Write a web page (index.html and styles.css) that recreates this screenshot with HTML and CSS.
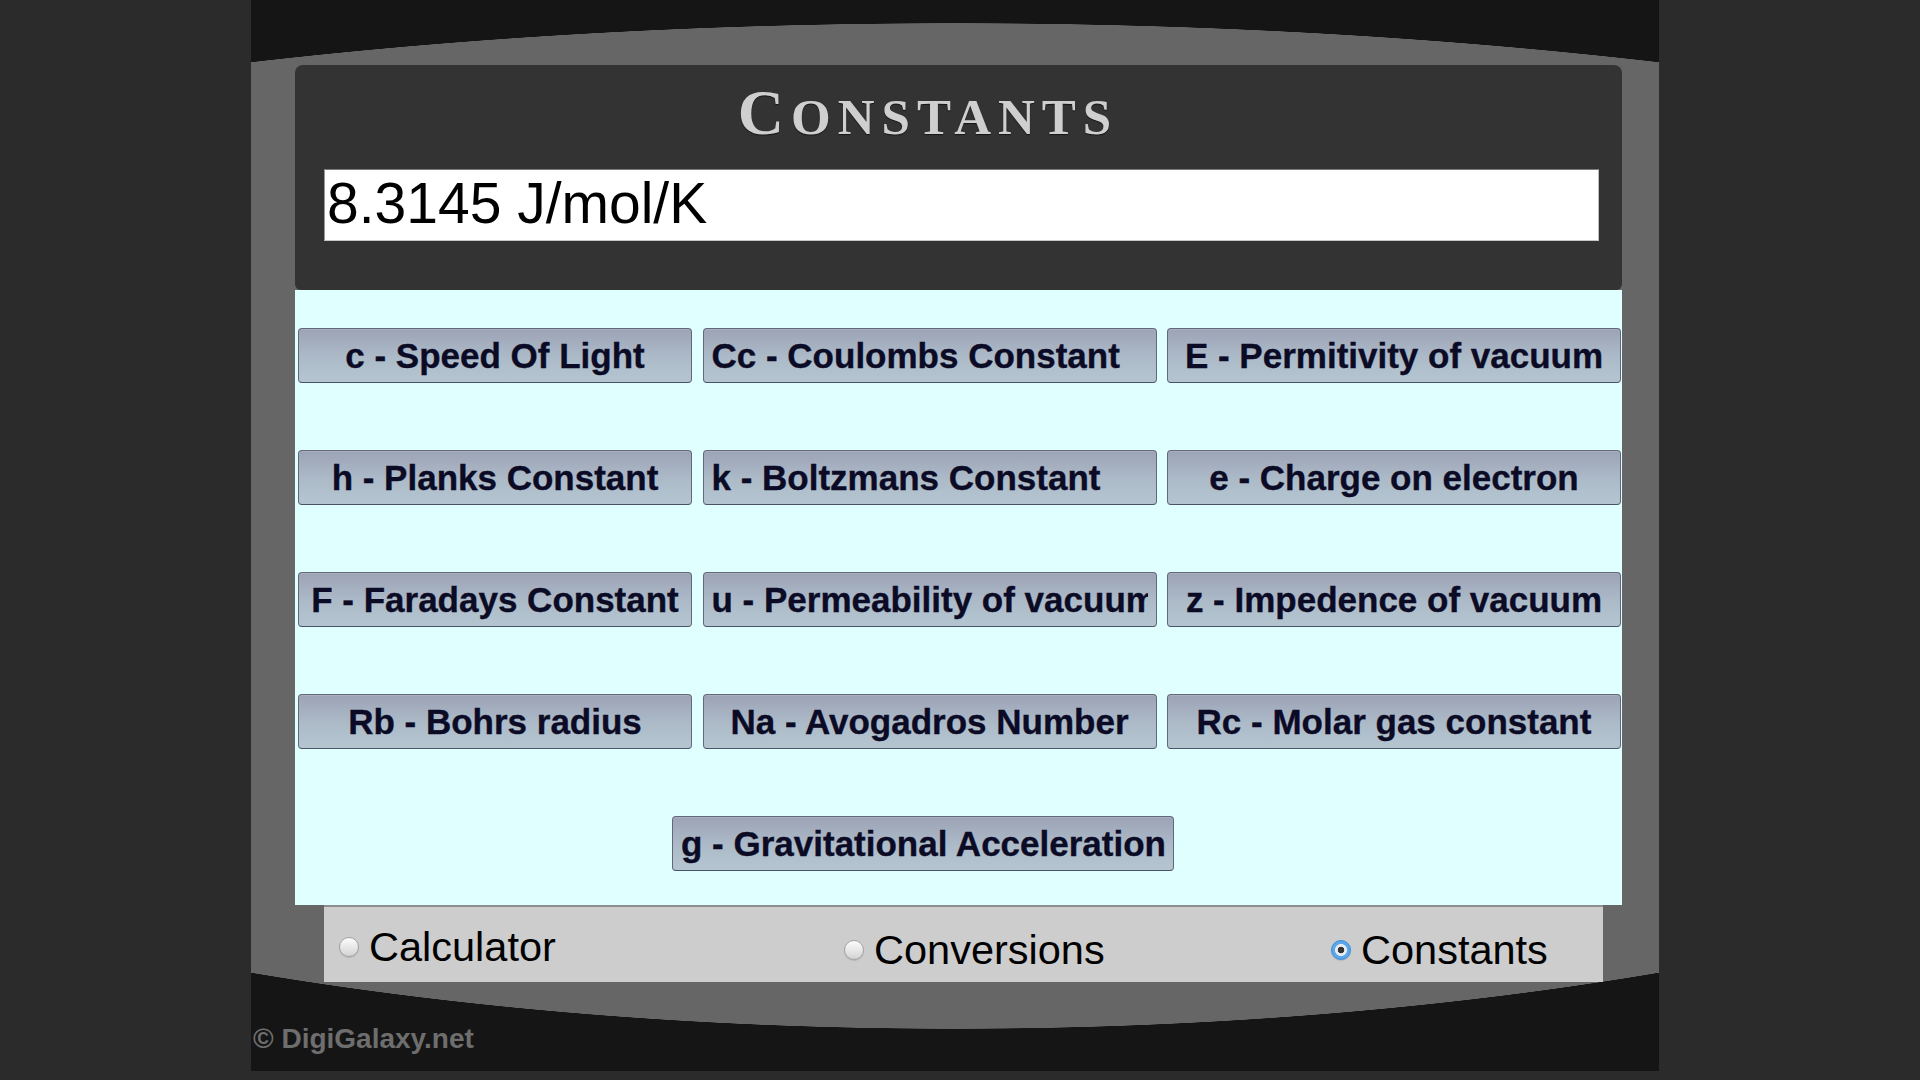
FILE: index.html
```html
<!DOCTYPE html>
<html>
<head>
<meta charset="utf-8">
<title>Constants</title>
<link rel="stylesheet" href="styles.css">
</head>
<body>
<div class="frame">
  <div class="header">
    <div class="title">C<span class="sc">ONSTANTS</span></div>
    <input class="display" type="text" value="8.3145 J/mol/K" readonly>
  </div>
  <div class="keys">
    <div class="grid">
      <button class="key"><span>c - Speed Of Light</span></button>
      <button class="key start"><span>Cc - Coulombs Constant</span></button>
      <button class="key"><span>E - Permitivity of vacuum</span></button>
      <button class="key"><span>h - Planks Constant</span></button>
      <button class="key start"><span>k - Boltzmans Constant</span></button>
      <button class="key"><span>e - Charge on electron</span></button>
      <button class="key"><span>F - Faradays Constant</span></button>
      <button class="key start"><span>u - Permeability of vacuum</span></button>
      <button class="key"><span>z - Impedence of vacuum</span></button>
      <button class="key"><span>Rb - Bohrs radius</span></button>
      <button class="key"><span>Na - Avogadros Number</span></button>
      <button class="key"><span>Rc - Molar gas constant</span></button>
    </div>
    <div class="lastrow">
      <button class="key wide"><span>g - Gravitational Acceleration</span></button>
    </div>
  </div>
  <div class="modes">
    <label class="mode m1"><span class="radio"></span><span class="lbl">Calculator</span></label>
    <label class="mode"><span class="radio"></span><span class="lbl">Conversions</span></label>
    <label class="mode"><span class="radio on"></span><span class="lbl">Constants</span></label>
  </div>
  <div class="copy">© DigiGalaxy.net</div>
</div>
</body>
</html>
```

FILE: styles.css
```css
html, body {
  margin: 0;
  padding: 0;
}

body {
  background: #2b2b2b;
  width: 1920px;
  height: 1080px;
  overflow: hidden;
  font-family: "Liberation Sans", Arial, sans-serif;
}

.frame {
  margin-left: 251px;
  width: 1408px;
  height: 1071px;
  box-sizing: border-box;
  padding-top: 65px;
  background:
    radial-gradient(1824px 503px at 704px 526px, #666666 99.9%, #151515 100%) left top / 100% 526px no-repeat,
    radial-gradient(1535px 503px at 704px 0px, #666666 99.9%, #151515 100%) left bottom / 100% 545px no-repeat,
    #151515;
}

.header {
  margin-left: 44px;
  width: 1327px;
  height: 225px;
  box-sizing: border-box;
  background: #333333;
  border-radius: 8px 8px 6px 6px;
  padding-top: 16px;
}

.title {
  height: 64px;
  line-height: 64px;
  font-family: "Liberation Serif", "Times New Roman", serif;
  font-weight: bold;
  font-size: 64px;
  letter-spacing: 7px;
  color: #cfcfcf;
  text-align: center;
  padding-right: 61px;
  text-shadow: 0 1px 1px rgba(0, 0, 0, 0.6);
}

.sc {
  font-size: 51px;
}

.display {
  display: block;
  margin: 24px 0 0 29px;
  width: 1275px;
  height: 72px;
  box-sizing: border-box;
  border: 1px solid #bdbdbd;
  border-top-color: #7a7a7a;
  border-left-color: #999999;
  border-bottom-color: #c8c8c8;
  background: #ffffff;
  padding: 0 0 4px 2px;
  font-family: "Liberation Sans", Arial, sans-serif;
  font-size: 57px;
  color: #000000;
  outline: none;
}

.keys {
  margin-left: 44px;
  width: 1327px;
  height: 615px;
  box-sizing: border-box;
  background: #e0ffff;
  padding: 38px 0 0 3px;
}

.grid {
  display: grid;
  grid-template-columns: 394px 454px 454px;
  column-gap: 10.5px;
  row-gap: 67px;
}

.lastrow {
  margin-top: 67px;
  padding-left: 374px;
}

.key {
  display: block;
  width: 100%;
  height: 55px;
  margin: 0;
  box-sizing: border-box;
  padding: 0 8px;
  border: 1px solid #62687a;
  border-bottom-color: #4b5166;
  border-radius: 4px;
  background: linear-gradient(#9ca3b5, #adbbc9 55%, #b4c5d0);
  box-shadow: inset 0 1px 0 rgba(255, 255, 255, 0.15);
  font-family: "Liberation Sans", Arial, sans-serif;
  font-weight: bold;
  font-size: 35px;
  line-height: 53px;
  color: #0b0b26;
  -webkit-text-stroke: 0.35px #0b0b26;
  text-align: center;
  cursor: pointer;
}

.key span {
  display: block;
  overflow: hidden;
  white-space: nowrap;
}

.key.start {
  text-align: left;
}

.key.wide {
  width: 502px;
}

.modes {
  margin-left: 73px;
  width: 1279px;
  height: 77px;
  box-sizing: border-box;
  background: #cdcdcd;
  border-top: 2px solid #8d8d8d;
  display: grid;
  grid-template-columns: 505px 487px auto;
  padding-left: 15px;
  align-items: start;
}

.mode {
  display: flex;
  align-items: center;
  gap: 10px;
  height: 41px;
  margin-top: 22px;
}

.mode.m1 {
  margin-top: 19px;
}

.lbl {
  font-size: 41.5px;
  line-height: 41px;
  color: #000000;
}

.radio {
  flex: none;
  width: 20px;
  height: 20px;
  box-sizing: border-box;
  border-radius: 50%;
  border: 1px solid #a3a3a3;
  background: linear-gradient(#fdfdfd, #d3d3d3);
  box-shadow: 0 1px 1px rgba(0, 0, 0, 0.12);
}

.radio.on {
  border: 1px solid #3a8ad6;
  background: radial-gradient(circle, #333333 0 3px, #e9edf2 3.6px 5.6px, #5aa8ea 6.4px);
}

.copy {
  margin-top: 43px;
  padding-left: 2px;
  font-size: 28px;
  line-height: 27px;
  font-weight: bold;
  color: #6e6e6e;
}
```
